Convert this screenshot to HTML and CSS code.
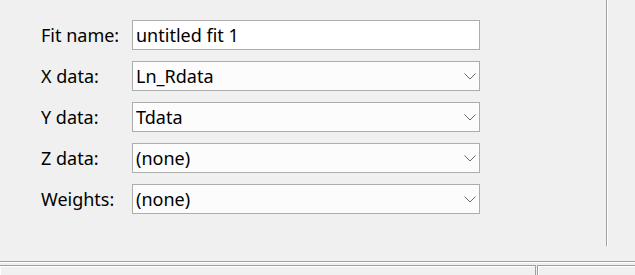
FILE: index.html
```html
<!DOCTYPE html>
<html>
<head>
<meta charset="utf-8">
<link rel="stylesheet" href="styles.css">
</head>
<body>
<div class="main">
  <div class="pane">
    <div class="form">
      <label class="lbl">Fit name:</label>
      <div class="field text">untitled fit 1</div>
      <label class="lbl">X data:</label>
      <div class="field select"><span>Ln_Rdata</span><svg class="chev" width="12" height="7" viewBox="0 0 12 7"><polyline points="0.5,0.5 6,6 11.5,0.5" fill="none" stroke="#6a6a6a" stroke-width="1"/></svg></div>
      <label class="lbl">Y data:</label>
      <div class="field select"><span>Tdata</span><svg class="chev" width="12" height="7" viewBox="0 0 12 7"><polyline points="0.5,0.5 6,6 11.5,0.5" fill="none" stroke="#6a6a6a" stroke-width="1"/></svg></div>
      <label class="lbl">Z data:</label>
      <div class="field select"><span>(none)</span><svg class="chev" width="12" height="7" viewBox="0 0 12 7"><polyline points="0.5,0.5 6,6 11.5,0.5" fill="none" stroke="#6a6a6a" stroke-width="1"/></svg></div>
      <label class="lbl">Weights:</label>
      <div class="field select"><span>(none)</span><svg class="chev" width="12" height="7" viewBox="0 0 12 7"><polyline points="0.5,0.5 6,6 11.5,0.5" fill="none" stroke="#6a6a6a" stroke-width="1"/></svg></div>
    </div>
  </div>
  <div class="rest"></div>
</div>
<div class="status">
  <div class="panel p1"></div>
  <div class="panel p2"></div>
</div>
</body>
</html>
```
FILE: styles.css
```css
html, body {
  margin: 0;
  padding: 0;
  background: #f0f0f0;
  width: 635px;
  height: 275px;
  overflow: hidden;
  font-family: "Noto Sans", "Open Sans", sans-serif;
  font-size: 18px;
  color: #000;
}
.main {
  display: flex;
  height: 246px;
}
.pane {
  width: 606px;
  border-right: 1px solid #a0a0a0;
  box-shadow: 1px 0 0 #ffffff;
}
.form {
  display: grid;
  grid-template-columns: 91px 348px;
  grid-auto-rows: 30px;
  row-gap: 11px;
  padding: 20px 0 0 41px;
}
.lbl {
  display: flex;
  align-items: center;
  white-space: nowrap;
  padding-bottom: 1px;
}
.field {
  box-sizing: border-box;
  border: 1px solid #adadad;
  height: 30px;
  display: flex;
  align-items: center;
  padding: 0 4px 1px 3px;
  white-space: nowrap;
}
.text {
  background: #ffffff;
}
.select {
  background: #fcfcfc;
  justify-content: space-between;
  padding-right: 3px;
}
.chev {
  display: block;
  margin-top: 2px;
}
.status {
  margin-top: 15px;
  border-top: 1px solid #a0a0a0;
  box-shadow: inset 0 1px 0 #ffffff;
  padding-top: 3px;
  display: flex;
  height: 14px;
}
.panel {
  border-top: 1px solid #a0a0a0;
  border-left: 1px solid #a0a0a0;
  box-shadow: inset 1px 1px 0 #ffffff;
  height: 13px;
}
.p1 {
  width: 535px;
  border-left: none;
  border-right: 1px solid #a0a0a0;
}
.p2 {
  flex: 1;
  margin-left: 1px;
}
```
